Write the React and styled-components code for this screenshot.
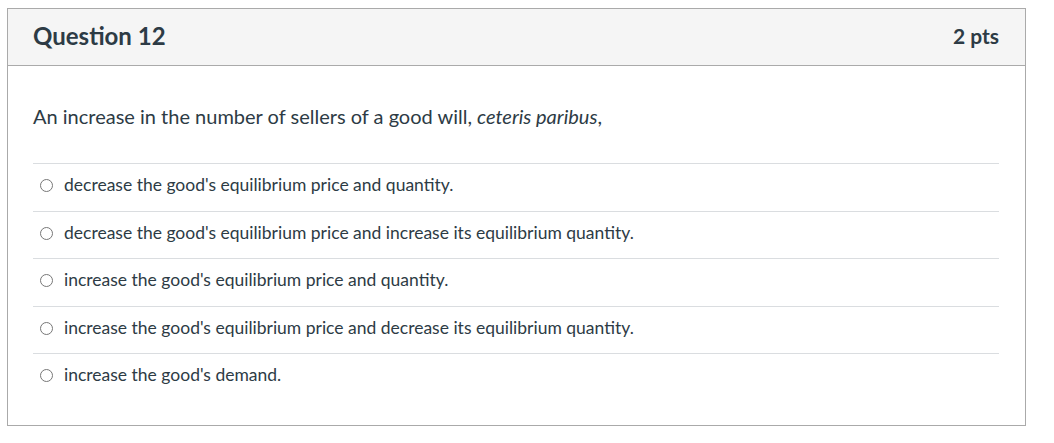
import React from "react"
import styled, { createGlobalStyle } from "styled-components"

const GlobalStyle = createGlobalStyle`
  html, body {
    margin: 0;
    padding: 0;
    background: #ffffff;
    font-family: Lato, "Open Sans", "Liberation Sans", sans-serif;
    color: #2d3b45;
  }
`

const Page = styled.div`
  padding: 8px 0 0 7px;
`

const Card = styled.div`
  width: 1017px;
  border: 1px solid #aaaaaa;
  background: #ffffff;
`

const Header = styled.div`
  height: 56px;
  display: flex;
  align-items: center;
  justify-content: space-between;
  padding: 0 26px 0 25px;
  background: #f5f5f5;
  border-bottom: 1px solid #aaaaaa;
`

const Title = styled.h2`
  margin: 0 0 3px;
  font-size: 24px;
  line-height: 28px;
  font-weight: 700;
  color: #2d3b45;
`

const Points = styled.span`
  margin-bottom: 3px;
  font-size: 21px;
  line-height: 26px;
  font-weight: 700;
  color: #2d3b45;
`

const Body = styled.div`
  padding: 38px 26px 24px 25px;
`

const Prompt = styled.p`
  margin: 0 0 35px;
  font-size: 20px;
  line-height: 24px;
`

const Answers = styled.div`
  display: flex;
  flex-direction: column;
`

const Answer = styled.label`
  display: flex;
  align-items: center;
  gap: 11px;
  padding: 10px 0 14px 7px;
  border-top: 1px solid #dadde0;
  font-size: 17.5px;
  line-height: 22.5px;
  cursor: pointer;
`

const Radio = styled.span`
  box-sizing: border-box;
  width: 13px;
  height: 13px;
  margin-top: 1px;
  border-radius: 50%;
  border: 1.5px solid #777777;
  background: #ffffff;
  flex: none;
`

const answers = [
  "decrease the good's equilibrium price and quantity.",
  "decrease the good's equilibrium price and increase its equilibrium quantity.",
  "increase the good's equilibrium price and quantity.",
  "increase the good's equilibrium price and decrease its equilibrium quantity.",
  "increase the good's demand.",
]

export default function App() {
  return (
    <Page>
      <GlobalStyle />
      <Card>
        <Header>
          <Title>Question 12</Title>
          <Points>2 pts</Points>
        </Header>
        <Body>
          <Prompt>
            An increase in the number of sellers of a good will, <i>ceteris paribus</i>,
          </Prompt>
          <Answers>
            {answers.map((a) => (
              <Answer key={a}>
                <Radio />
                {a}
              </Answer>
            ))}
          </Answers>
        </Body>
      </Card>
    </Page>
  )
}
